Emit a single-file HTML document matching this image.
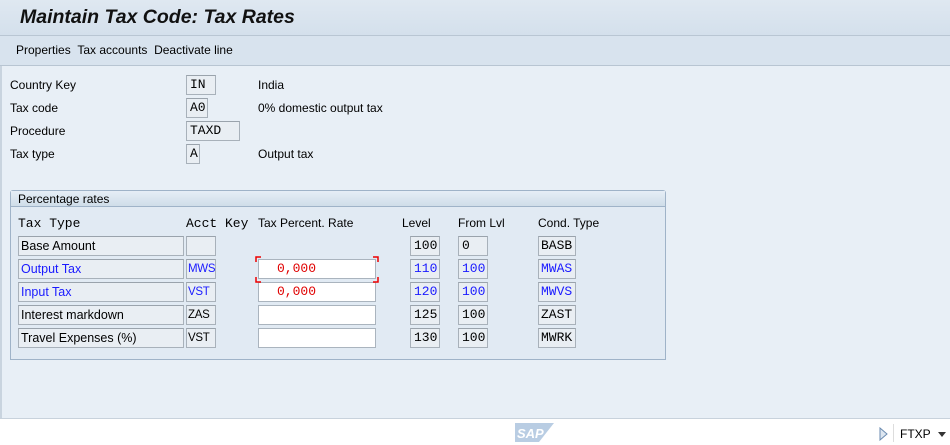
<!DOCTYPE html>
<html><head><style>
*{margin:0;padding:0;box-sizing:border-box}
body{width:950px;height:445px;background:#fff;font-family:"Liberation Sans",sans-serif;font-size:12px;color:#000;position:relative;overflow:hidden}
.win{position:absolute;left:0;top:0;width:950px;height:419px;background:#e8eff6;box-shadow:inset 2px 0 0 #c9d4df;border-bottom:1px solid #c8d2dc}
.title{position:absolute;left:0;top:0;width:950px;height:36px;background:linear-gradient(#dfe8f1,#d4e0ec);border-bottom:1px solid #b9c6d3}
.title span{position:absolute;left:20px;top:6px;font-size:19.5px;font-weight:bold;font-style:italic;color:#111}
.tb{position:absolute;left:0;top:36px;width:950px;height:30px;background:#d8e3ee;border-bottom:1px solid #b8c5d2}
.tb span{position:absolute;left:16px;top:7px;font-size:12px}
.a{position:absolute;white-space:nowrap}
.f{position:absolute;height:20px;background:#e9eef3;border:1px solid #a8b1ba;border-top-color:#9aa3ac;font-family:"Liberation Mono",monospace;font-size:13px;padding:2px 0 0 3px;line-height:14px;white-space:nowrap;overflow:hidden}
.s{font-family:"Liberation Sans",sans-serif;font-size:12.5px;padding-left:2px}
.k{font-size:11.5px;padding-left:1px;letter-spacing:-0.3px}
.in{background:#fff;border-color:#aab4be;color:#e00000}
.b{color:#1a1aff}
.grp{position:absolute;left:10px;top:190px;width:656px;height:170px;border:1px solid #9fb3c8;border-radius:3px 3px 0 0;background:#e1eaf3}
.gh{position:absolute;left:0;top:0;width:654px;height:16px;background:linear-gradient(#e6eef6,#cfdde9);border-bottom:1px solid #9fb3c8}
.gh span{position:absolute;left:7px;top:1px;font-size:12px}
.mono{font-family:"Liberation Mono",monospace}
</style></head><body>
<div class="win">
<div class="title"><span>Maintain Tax Code: Tax Rates</span></div>
<div class="tb"><span>Properties&nbsp;&nbsp;Tax accounts&nbsp;&nbsp;Deactivate line</span></div>

<div class="a" style="left:10px;top:78px">Country Key</div>
<div class="a" style="left:10px;top:101px">Tax code</div>
<div class="a" style="left:10px;top:124px">Procedure</div>
<div class="a" style="left:10px;top:147px">Tax type</div>
<div class="f" style="left:186px;top:75px;width:30px">IN</div>
<div class="f" style="left:186px;top:98px;width:22px">A0</div>
<div class="f" style="left:186px;top:121px;width:54px">TAXD</div>
<div class="f" style="left:186px;top:144px;width:14px">A</div>
<div class="a" style="left:258px;top:78px">India</div>
<div class="a" style="left:258px;top:101px">0% domestic output tax</div>
<div class="a" style="left:258px;top:147px">Output tax</div>

<div class="grp"><div class="gh"><span>Percentage rates</span></div></div>
<div class="a mono" style="left:18px;top:216px;font-size:13px">Tax Type</div>
<div class="a mono" style="left:186px;top:216px;font-size:13px">Acct Key</div>
<div class="a" style="left:258px;top:216px">Tax Percent. Rate</div>
<div class="a" style="left:402px;top:216px">Level</div>
<div class="a" style="left:458px;top:216px">From Lvl</div>
<div class="a" style="left:538px;top:216px">Cond. Type</div>

<div class="f s" style="left:18px;top:236px;width:166px">Base Amount</div>
<div class="f" style="left:186px;top:236px;width:30px"></div>
<div class="f" style="left:410px;top:236px;width:30px">100</div>
<div class="f" style="left:458px;top:236px;width:30px">0</div>
<div class="f" style="left:538px;top:236px;width:38px;padding-left:2px">BASB</div>

<div class="f s b" style="left:18px;top:259px;width:166px">Output Tax</div>
<div class="f s b k" style="left:186px;top:259px;width:30px">MWS</div>
<div class="f in" style="left:258px;top:259px;width:118px;padding-left:18px">0,000</div>
<div class="f b" style="left:410px;top:259px;width:30px">110</div>
<div class="f b" style="left:458px;top:259px;width:30px">100</div>
<div class="f b" style="left:538px;top:259px;width:38px;padding-left:2px">MWAS</div>

<div class="f s b" style="left:18px;top:282px;width:166px">Input Tax</div>
<div class="f s b k" style="left:186px;top:282px;width:30px">VST</div>
<div class="f in" style="left:258px;top:282px;width:118px;padding-left:18px">0,000</div>
<div class="f b" style="left:410px;top:282px;width:30px">120</div>
<div class="f b" style="left:458px;top:282px;width:30px">100</div>
<div class="f b" style="left:538px;top:282px;width:38px;padding-left:2px">MWVS</div>

<div class="f s" style="left:18px;top:305px;width:166px">Interest markdown</div>
<div class="f s k" style="left:186px;top:305px;width:30px">ZAS</div>
<div class="f in" style="left:258px;top:305px;width:118px"></div>
<div class="f" style="left:410px;top:305px;width:30px">125</div>
<div class="f" style="left:458px;top:305px;width:30px">100</div>
<div class="f" style="left:538px;top:305px;width:38px;padding-left:2px">ZAST</div>

<div class="f s" style="left:18px;top:328px;width:166px">Travel Expenses (%)</div>
<div class="f s k" style="left:186px;top:328px;width:30px">VST</div>
<div class="f in" style="left:258px;top:328px;width:118px"></div>
<div class="f" style="left:410px;top:328px;width:30px">130</div>
<div class="f" style="left:458px;top:328px;width:30px">100</div>
<div class="f" style="left:538px;top:328px;width:38px;padding-left:2px">MWRK</div>
</div>
<svg style="position:absolute;left:255px;top:256px" width="124" height="27"><path d="M1 6V1H6M118 1H123V6M1 21V26H6M118 26H123V21" stroke="#e00" stroke-width="1.5" fill="none"/></svg>

<svg style="position:absolute;left:515px;top:423px" width="40" height="20"><polygon points="0,0 39,0 24,19 0,19" fill="#b9cde3"/><text x="2" y="15" font-family="Liberation Sans" font-weight="bold" font-style="italic" font-size="13" fill="#fff">SAP</text></svg>
<svg style="position:absolute;left:879px;top:427px" width="10" height="14"><path d="M1 1L8 7L1 13Z" fill="#dde6f0" stroke="#6b8bb0"/></svg>
<div class="a" style="left:893px;top:424px;width:1px;height:18px;background:#ddd"></div>
<div class="a" style="left:900px;top:427px;font-size:12px">FTXP</div>
<svg style="position:absolute;left:938px;top:432px" width="9" height="6"><path d="M0 0H8L4 5Z" fill="#333"/></svg>
</body></html>
